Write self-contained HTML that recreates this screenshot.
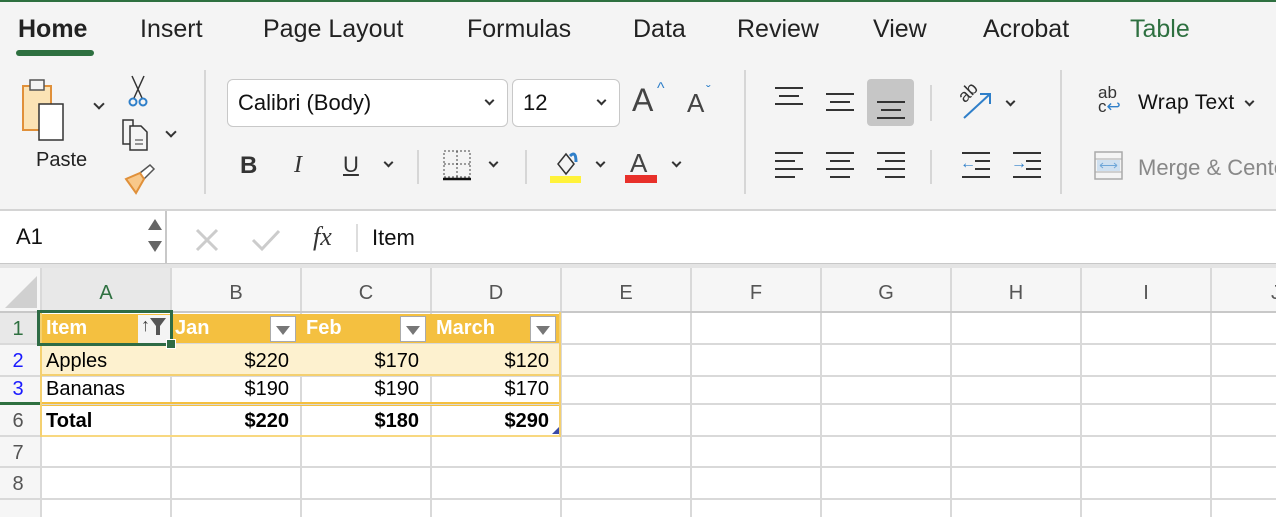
<!DOCTYPE html>
<html><head><meta charset="utf-8">
<style>
*{margin:0;padding:0;box-sizing:border-box}
body{width:1276px;height:517px;overflow:hidden;background:#fff;font-family:"Liberation Sans",Arial,sans-serif;position:relative}
.a{position:absolute}
.tab{position:absolute;top:15px;font-size:25px;color:#222;white-space:nowrap}
.sep{position:absolute;width:2px;background:#d6d6d6}
.chev{position:absolute;width:8px;height:8px;border-right:2px solid #333;border-bottom:2px solid #333;transform:rotate(45deg)}
.box{position:absolute;background:#fff;border:1px solid #c8c8c8;border-radius:6px}
.ln{position:absolute;height:2px;background:#333}
.vl{position:absolute;top:268px;bottom:0;width:2px;background:#d9d9d9}
.hl{position:absolute;left:0;right:0;height:2px;background:#d9d9d9}
.ch{position:absolute;top:282px;font-size:20px;color:#555;text-align:center}
.rh{position:absolute;left:0;width:36px;text-align:center;font-size:20px;color:#555}
.c{position:absolute;font-size:20px;color:#000;white-space:nowrap}
.r{text-align:right}
.hd{position:absolute;top:314px;height:29px;background:#f4c040}
.dd{position:absolute;top:316px;width:26px;height:26px;background:#fff;border:1px solid #aaa}
.dd:after{content:"";position:absolute;left:5px;top:9px;border-left:7px solid transparent;border-right:7px solid transparent;border-top:9px solid #777}
.ht{position:absolute;top:317px;font-size:20px;font-weight:bold;color:#fff}
</style></head><body>
<div class="a" style="left:0;top:0;width:1276px;height:210px;background:#f4f4f4"></div>
<div class="a" style="left:0;top:0;width:1276px;height:2px;background:#2e7040"></div>
<div class="tab" style="left:18px;font-weight:bold">Home</div>
<div class="a" style="left:16px;top:50px;width:78px;height:6px;border-radius:3px;background:#2e7040"></div>
<div class="tab" style="left:140px">Insert</div>
<div class="tab" style="left:263px">Page Layout</div>
<div class="tab" style="left:467px">Formulas</div>
<div class="tab" style="left:633px">Data</div>
<div class="tab" style="left:737px">Review</div>
<div class="tab" style="left:873px">View</div>
<div class="tab" style="left:983px">Acrobat</div>
<div class="tab" style="left:1130px;color:#2e7040">Table</div>

<svg class="a" style="left:20px;top:76px" width="70" height="70" viewBox="0 0 70 70">
<rect x="3" y="10" width="28" height="44" fill="#fbe3b5" stroke="#e0903a" stroke-width="2"/>
<rect x="10" y="4" width="14" height="10" fill="#f4f4f4" stroke="#555" stroke-width="1.5"/>
<rect x="19" y="28" width="24" height="36" fill="#fff" stroke="#333" stroke-width="1.5"/>
</svg>
<div class="chev" style="left:95px;top:100px"></div>
<div class="a" style="left:36px;top:149px;font-size:20px;color:#222">Paste</div>
<svg class="a" style="left:124px;top:74px" width="30" height="36" viewBox="0 0 30 36"><path d="M8 2 L18 24 M20 2 L10 24" stroke="#333" stroke-width="1.5" fill="none"/><circle cx="9" cy="28" r="3.5" fill="none" stroke="#2f7fc9" stroke-width="2"/><circle cx="19" cy="28" r="3.5" fill="none" stroke="#2f7fc9" stroke-width="2"/></svg>
<svg class="a" style="left:120px;top:118px" width="34" height="34" viewBox="0 0 34 34"><path d="M3 2 H13 V26 H3 Z" fill="none" stroke="#333" stroke-width="1.5"/><path d="M10 8 H21 L27 14 V32 H10 Z" fill="#f4f4f4" stroke="#333" stroke-width="1.5"/><path d="M15 22H23M15 26H23" stroke="#333"/></svg>
<div class="chev" style="left:167px;top:128px"></div>
<svg class="a" style="left:122px;top:163px" width="34" height="32" viewBox="0 0 34 32"><path d="M18 10 L28 2 L32 6 L22 16 Z" fill="#fff" stroke="#555" stroke-width="1.5"/><path d="M4 16 L18 10 L22 16 L14 30 Z" fill="#f8c88a" stroke="#e0903a" stroke-width="2"/></svg>
<div class="sep" style="left:204px;top:70px;height:124px"></div>

<div class="box" style="left:227px;top:79px;width:281px;height:48px"></div>
<div class="a" style="left:238px;top:90px;font-size:22px;color:#111">Calibri (Body)</div>
<div class="chev" style="left:486px;top:97px;width:7px;height:7px"></div>
<div class="box" style="left:512px;top:79px;width:108px;height:48px"></div>
<div class="a" style="left:523px;top:90px;font-size:22px;color:#111">12</div>
<div class="chev" style="left:598px;top:97px;width:7px;height:7px"></div>
<div class="a" style="left:632px;top:82px;font-size:32px;color:#444">A</div>
<div class="a" style="left:657px;top:80px;font-size:16px;color:#2f7fc9">^</div>
<div class="a" style="left:687px;top:88px;font-size:26px;color:#444">A</div>
<div class="a" style="left:706px;top:82px;font-size:14px;color:#2f7fc9">ˇ</div>
<div class="a" style="left:240px;top:152px;font-size:24px;font-weight:bold;color:#333">B</div>
<div class="a" style="left:294px;top:152px;font-size:24px;font-style:italic;color:#333;font-family:'Liberation Serif',serif">I</div>
<div class="a" style="left:343px;top:152px;font-size:22px;color:#333;text-decoration:underline">U</div>
<div class="chev" style="left:385px;top:159px;width:7px;height:7px"></div>
<div class="sep" style="left:417px;top:150px;height:34px"></div>
<svg class="a" style="left:443px;top:150px" width="30" height="32" viewBox="0 0 30 32"><rect x="1" y="1" width="26" height="26" fill="none" stroke="#444" stroke-dasharray="2 2"/><path d="M14 1V27M1 14H27" stroke="#444" stroke-dasharray="2 2"/><path d="M0 29H28" stroke="#111" stroke-width="2.5"/></svg>
<div class="chev" style="left:490px;top:159px;width:7px;height:7px"></div>
<div class="sep" style="left:525px;top:150px;height:34px"></div>
<svg class="a" style="left:550px;top:148px" width="34" height="36" viewBox="0 0 34 36"><path d="M8 16 L16 6 L24 16 L16 26 Z" fill="none" stroke="#333" stroke-width="1.5"/><path d="M20 8 Q26 2 26 14" stroke="#2f7fc9" stroke-width="3" fill="none"/><rect x="0" y="28" width="31" height="7" fill="#fff23a"/></svg>
<div class="chev" style="left:597px;top:159px;width:7px;height:7px"></div>
<div class="a" style="left:630px;top:148px;font-size:26px;color:#444">A</div>
<div class="a" style="left:625px;top:175px;width:32px;height:8px;background:#e8302a"></div>
<div class="chev" style="left:673px;top:159px;width:7px;height:7px"></div>
<div class="sep" style="left:744px;top:70px;height:124px"></div>

<div class="ln" style="left:775px;top:87px;width:28px"></div><div class="ln" style="left:779px;top:95px;width:20px"></div><div class="ln" style="left:775px;top:103px;width:28px"></div>
<div class="ln" style="left:826px;top:93px;width:28px"></div><div class="ln" style="left:830px;top:101px;width:20px"></div><div class="ln" style="left:826px;top:109px;width:28px"></div>
<div class="a" style="left:867px;top:79px;width:47px;height:47px;background:#c6c6c6;border-radius:4px"></div>
<div class="ln" style="left:877px;top:101px;width:28px"></div><div class="ln" style="left:881px;top:109px;width:20px"></div><div class="ln" style="left:877px;top:117px;width:28px"></div>
<div class="sep" style="left:930px;top:85px;height:36px"></div>
<div class="a" style="left:958px;top:82px;font-size:18px;color:#333;transform:rotate(-45deg)">ab</div>
<svg class="a" style="left:962px;top:90px" width="32" height="30"><path d="M2 28 L28 4 M18 4 H28 V14" stroke="#2f7fc9" stroke-width="2" fill="none"/></svg>
<div class="chev" style="left:1007px;top:98px;width:7px;height:7px"></div>
<div class="ln" style="left:775px;top:152px;width:28px"></div><div class="ln" style="left:775px;top:160px;width:20px"></div><div class="ln" style="left:775px;top:168px;width:28px"></div><div class="ln" style="left:775px;top:176px;width:20px"></div>
<div class="ln" style="left:826px;top:152px;width:28px"></div><div class="ln" style="left:830px;top:160px;width:20px"></div><div class="ln" style="left:826px;top:168px;width:28px"></div><div class="ln" style="left:830px;top:176px;width:20px"></div>
<div class="ln" style="left:877px;top:152px;width:28px"></div><div class="ln" style="left:885px;top:160px;width:20px"></div><div class="ln" style="left:877px;top:168px;width:28px"></div><div class="ln" style="left:885px;top:176px;width:20px"></div>
<div class="sep" style="left:930px;top:150px;height:34px"></div>
<div class="ln" style="left:962px;top:152px;width:28px"></div><div class="ln" style="left:975px;top:160px;width:15px"></div><div class="ln" style="left:975px;top:168px;width:15px"></div><div class="ln" style="left:962px;top:176px;width:28px"></div>
<div class="a" style="left:960px;top:155px;font-size:16px;color:#2f7fc9;font-weight:bold">←</div>
<div class="ln" style="left:1013px;top:152px;width:28px"></div><div class="ln" style="left:1026px;top:160px;width:15px"></div><div class="ln" style="left:1026px;top:168px;width:15px"></div><div class="ln" style="left:1013px;top:176px;width:28px"></div>
<div class="a" style="left:1011px;top:155px;font-size:16px;color:#2f7fc9;font-weight:bold">→</div>
<div class="sep" style="left:1060px;top:70px;height:124px"></div>
<div class="a" style="left:1098px;top:86px;font-size:17px;color:#333;line-height:14px">ab<br>c<span style="color:#2f7fc9">↩</span></div>
<div class="a" style="left:1138px;top:91px;font-size:21px;color:#111;letter-spacing:0.3px">Wrap Text</div>
<div class="chev" style="left:1246px;top:98px;width:7px;height:7px"></div>
<svg class="a" style="left:1094px;top:151px" width="30" height="30"><rect x="1" y="1" width="27" height="27" fill="none" stroke="#aaa" stroke-width="1.5"/><path d="M1 8H28M1 21H28" stroke="#aaa"/><rect x="3" y="9" width="23" height="11" fill="#cfe0f0"/><path d="M6 14.5H23M6 14.5L9 12M6 14.5L9 17M23 14.5L20 12M23 14.5L20 17" stroke="#6ea6d8" fill="none"/></svg>
<div class="a" style="left:1138px;top:155px;font-size:22px;color:#888;white-space:nowrap">Merge &amp; Center</div>
<div class="a" style="left:0;top:209px;width:1276px;height:2px;background:#d4d4d4"></div>

<div class="a" style="left:0;top:211px;width:1276px;height:52px;background:#fff"></div>
<div class="a" style="left:165px;top:211px;width:2px;height:52px;background:#c8c8c8"></div>
<div class="a" style="left:16px;top:224px;font-size:22px;color:#111">A1</div>
<div class="a" style="left:148px;top:219px;border-left:7px solid transparent;border-right:7px solid transparent;border-bottom:11px solid #666"></div>
<div class="a" style="left:148px;top:241px;border-left:7px solid transparent;border-right:7px solid transparent;border-top:11px solid #666"></div>
<svg class="a" style="left:195px;top:228px" width="24" height="24"><path d="M2 2L22 22M22 2L2 22" stroke="#ccc" stroke-width="3"/></svg>
<svg class="a" style="left:251px;top:228px" width="30" height="24"><path d="M2 12L11 21L28 3" stroke="#ccc" stroke-width="3" fill="none"/></svg>
<div class="a" style="left:313px;top:222px;font-size:26px;font-style:italic;color:#333;font-family:'Liberation Serif',serif">fx</div>
<div class="a" style="left:356px;top:224px;width:2px;height:28px;background:#ddd"></div>
<div class="a" style="left:372px;top:225px;font-size:22px;color:#111">Item</div>
<div class="a" style="left:0;top:263px;width:1276px;height:5px;background:#e4e4e4;border-top:1px solid #c8c8c8"></div>

<div class="a" style="left:0;top:268px;width:1276px;height:44px;background:#f6f6f6"></div>
<div class="a" style="left:41px;top:268px;width:130px;height:44px;background:#e8e8e8"></div>
<div class="a" style="left:0;top:312px;width:41px;height:205px;background:#f6f6f6"></div>
<div class="a" style="left:0;top:312px;width:41px;height:32px;background:#e8e8e8"></div>
<svg class="a" style="left:5px;top:276px" width="32" height="32"><path d="M32 0V32H0Z" fill="#d0d0d0"/></svg>

<div class="vl" style="left:40px"></div>
<div class="vl" style="left:170px"></div>
<div class="vl" style="left:300px"></div>
<div class="vl" style="left:430px"></div>
<div class="vl" style="left:560px"></div>
<div class="vl" style="left:690px"></div>
<div class="vl" style="left:820px"></div>
<div class="vl" style="left:950px"></div>
<div class="vl" style="left:1080px"></div>
<div class="vl" style="left:1210px"></div>
<div class="hl" style="top:311px;background:#c8c8c8"></div>
<div class="hl" style="top:343px"></div>
<div class="hl" style="top:375px"></div>
<div class="hl" style="top:403px"></div>
<div class="hl" style="top:435px"></div>
<div class="hl" style="top:466px"></div>
<div class="hl" style="top:498px"></div>

<div class="ch" style="left:41px;width:130px;color:#2e7040">A</div>
<div class="ch" style="left:171px;width:130px">B</div>
<div class="ch" style="left:301px;width:130px">C</div>
<div class="ch" style="left:431px;width:130px">D</div>
<div class="ch" style="left:561px;width:130px">E</div>
<div class="ch" style="left:691px;width:130px">F</div>
<div class="ch" style="left:821px;width:130px">G</div>
<div class="ch" style="left:951px;width:130px">H</div>
<div class="ch" style="left:1081px;width:130px">I</div>
<div class="ch" style="left:1211px;width:130px">J</div>

<div class="rh" style="top:318px;color:#2e7040">1</div>
<div class="rh" style="top:350px;color:#1a1aff">2</div>
<div class="rh" style="top:378px;color:#1a1aff">3</div>
<div class="a" style="left:0;top:402px;width:41px;height:3px;background:#2e7040"></div>
<div class="rh" style="top:410px">6</div>
<div class="rh" style="top:442px">7</div>
<div class="rh" style="top:473px">8</div>

<div class="hd" style="left:41px;width:520px"></div>
<div class="a" style="left:41px;top:344px;width:520px;height:31px;background:#fdf1cf"></div>
<div class="a" style="left:41px;top:344px;width:520px;height:32px;border-bottom:2px solid #f4d070"></div>
<div class="a" style="left:41px;top:402px;width:520px;height:4px;border-top:2px solid #f4c040;border-bottom:1px solid #f4c040"></div>
<div class="a" style="left:41px;top:435px;width:520px;height:2px;background:#f8d880"></div>
<div class="a" style="left:559px;top:312px;width:2px;height:125px;background:#f4d070"></div>
<div class="a" style="left:40px;top:311px;width:2px;height:126px;background:#f4d070"></div>

<div class="ht" style="left:46px">Item</div>
<div class="a" style="left:138px;top:315px;width:32px;height:28px;background:#f4f4f4"></div>
<div class="a" style="left:141px;top:315px;font-size:18px;color:#444">↑</div>
<svg class="a" style="left:150px;top:318px" width="16" height="18"><path d="M0 0H16L10 8V17H6V8Z" fill="#555"/></svg>
<div class="ht" style="left:175px">Jan</div>
<div class="dd" style="left:270px"></div>
<div class="ht" style="left:306px">Feb</div>
<div class="dd" style="left:400px"></div>
<div class="ht" style="left:436px">March</div>
<div class="dd" style="left:530px"></div>
<div class="a" style="left:37px;top:310px;width:136px;height:36px;border:3px solid #2e6b45"></div>
<div class="a" style="left:166px;top:339px;width:10px;height:10px;background:#2e6b45;border:1px solid #fff"></div>

<div class="c" style="left:46px;top:350px">Apples</div>
<div class="c r" style="left:171px;width:118px;top:350px">$220</div>
<div class="c r" style="left:301px;width:118px;top:350px">$170</div>
<div class="c r" style="left:431px;width:118px;top:350px">$120</div>
<div class="c" style="left:46px;top:378px">Bananas</div>
<div class="c r" style="left:171px;width:118px;top:378px">$190</div>
<div class="c r" style="left:301px;width:118px;top:378px">$190</div>
<div class="c r" style="left:431px;width:118px;top:378px">$170</div>
<div class="c" style="left:46px;top:410px;font-weight:bold">Total</div>
<div class="c r" style="left:171px;width:118px;top:410px;font-weight:bold">$220</div>
<div class="c r" style="left:301px;width:118px;top:410px;font-weight:bold">$180</div>
<div class="c r" style="left:431px;width:118px;top:410px;font-weight:bold">$290</div>
<svg class="a" style="left:552px;top:427px" width="7" height="7"><path d="M7 0V7H0Z" fill="#3a4aa8"/></svg>
</body></html>
